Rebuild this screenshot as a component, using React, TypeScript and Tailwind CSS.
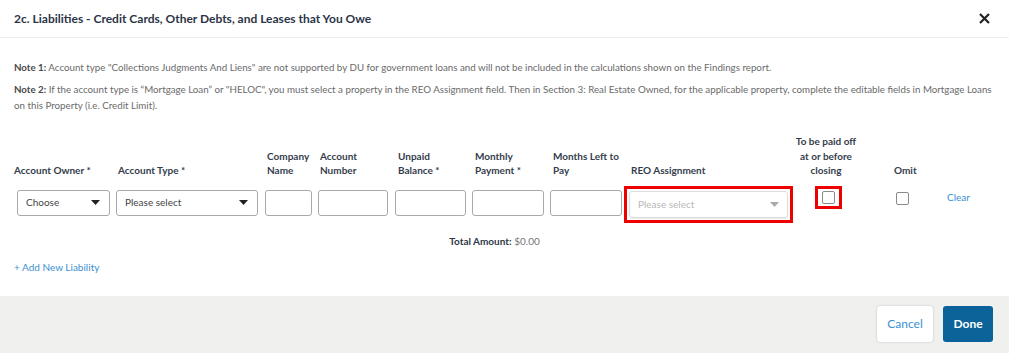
import React from "react";

const font = { fontFamily: "Lato, 'Noto Sans', sans-serif" };

const Caret = ({ color = "#222" }: { color?: string }) => (
  <svg width="9" height="5" viewBox="0 0 9 5">
    <path d="M0 0h9L4.5 5z" fill={color} />
  </svg>
);

const TextBox = ({ w }: { w: string }) => (
  <div className={`h-[26px] ${w} rounded-[3px] border border-[#a9a9a9] bg-white`} />
);

const Checkbox = () => (
  <div className="h-[13px] w-[13px] rounded-[2px] border border-[#8a8a8a] bg-white" />
);

export default function App() {
  return (
    <div className="h-[353px] w-[1009px] bg-white text-[#2f3747] overflow-hidden" style={font}>
      <header className="flex h-[38px] items-center justify-between border-b border-[#ededed] pl-[14px] pr-[19px]">
        <h1 className="text-[12px] font-bold text-[#2b3446]">
          2c. Liabilities - Credit Cards, Other Debts, and Leases that You Owe
        </h1>
        <svg width="11" height="11" viewBox="0 0 11 11">
          <path d="M1 1l9 9M10 1l-9 9" stroke="#222" strokeWidth="2.2" />
        </svg>
      </header>

      <div className="pl-[14px] pr-[12px] pt-[21px] text-[9.75px] leading-[16px] text-[#6a6a6a]">
        <p>
          <span className="font-bold text-[#4a4a4a]">Note 1:</span> Account type "Collections Judgments And Liens" are not
          supported by DU for government loans and will not be included in the calculations shown on the Findings report.
        </p>
        <p className="mt-[6px]">
          <span className="font-bold text-[#4a4a4a]">Note 2:</span> If the account type is “Mortgage Loan” or "HELOC", you
          must select a property in the REO Assignment field. Then in Section 3: Real Estate Owned, for the applicable
          property, complete the editable fields in Mortgage Loans on this Property (i.e. Credit Limit).
        </p>
      </div>

      <div className="mt-[21px] pl-[14px] text-[10px] font-bold leading-[14.5px] text-[#353d4d]">
        <div className="flex items-end">
          <div className="w-[99px]">Account Owner *</div>
          <div className="w-[149px] pl-[5px]">Account Type *</div>
          <div className="w-[53px] pl-[5px]">Company<br />Name</div>
          <div className="w-[77px] pl-[5px]">Account<br />Number</div>
          <div className="w-[77px] pl-[6px]">Unpaid<br />Balance *</div>
          <div className="w-[78px] pl-[6px]">Monthly<br />Payment *</div>
          <div className="w-[78px] pl-[6px]">Months Left to<br />Pay</div>
          <div className="w-[166px] pl-[6px]">REO Assignment</div>
          <div className="w-[70px] text-center">To be paid off<br />at or before<br />closing</div>
          <div className="w-[60px] pl-[33px]">Omit</div>
        </div>

        <div className="mt-[12px] flex items-start font-normal">
          <div className="w-[99px] pl-[3px]">
            <div className="flex h-[26px] w-[93px] items-center justify-between rounded-[3px] border border-[#a9a9a9] pl-[8px] pr-[9px] text-[10px] text-[#444]">
              Choose
              <Caret />
            </div>
          </div>
          <div className="w-[149px] pl-[3px]">
            <div className="flex h-[26px] w-[142px] items-center justify-between rounded-[3px] border border-[#a9a9a9] pl-[8px] pr-[9px] text-[10px] text-[#444]">
              Please select
              <Caret />
            </div>
          </div>
          <div className="w-[53px] pl-[3px]"><TextBox w="w-[47px]" /></div>
          <div className="w-[77px] pl-[3px]"><TextBox w="w-[70px]" /></div>
          <div className="w-[77px] pl-[3px]"><TextBox w="w-[71px]" /></div>
          <div className="w-[78px] pl-[3px]"><TextBox w="w-[72px]" /></div>
          <div className="w-[77px] pl-[3px]"><TextBox w="w-[72px]" /></div>
          <div className="-mt-[4px] w-[168px]">
            <div className="w-[169px] border-[3px] border-[#ee0000] p-[2px]">
              <div className="flex h-[27px] items-center justify-between rounded-[3px] border border-[#dcdcdc] pl-[8px] pr-[8px] text-[10px] text-[#b8b8b8] shadow-[0_1px_1px_rgba(0,0,0,0.08)]">
                Please select
                <Caret color="#aaa" />
              </div>
            </div>
          </div>
          <div className="-mt-[4px] flex w-[70px] justify-center pl-[2px]">
            <div className="border-[3px] border-[#ee0000] px-[4px] py-[2px]">
              <Checkbox />
            </div>
          </div>
          <div className="flex w-[48px] pt-[2px] pl-[34px]">
            <Checkbox />
          </div>
          <div className="pl-[37px] text-[10px] leading-[14px] text-[#3b8fd1]">Clear</div>
        </div>
      </div>

      <div className="mt-[11px] pr-[20px] text-center text-[10px] leading-[14px] text-[#2f3747]">
        <span className="font-bold">Total Amount:</span> <span className="text-[#777]">$0.00</span>
      </div>

      <div className="mt-[12px] pl-[14px] text-[10px] leading-[14px] text-[#3b8fd1]">+ Add New Liability</div>

      <footer className="mt-[22px] flex h-[57px] items-center justify-end gap-[10px] bg-[#f0f0ee] pr-[16px]">
        <button className="h-[36px] w-[56px] rounded-[3px] bg-white text-[12px] text-[#3b8fd1] shadow-[0_0_2px_rgba(0,0,0,0.25)]">
          Cancel
        </button>
        <button className="h-[36px] w-[50px] rounded-[3px] bg-[#0b6399] text-[12px] font-bold text-white">Done</button>
      </footer>
    </div>
  );
}
